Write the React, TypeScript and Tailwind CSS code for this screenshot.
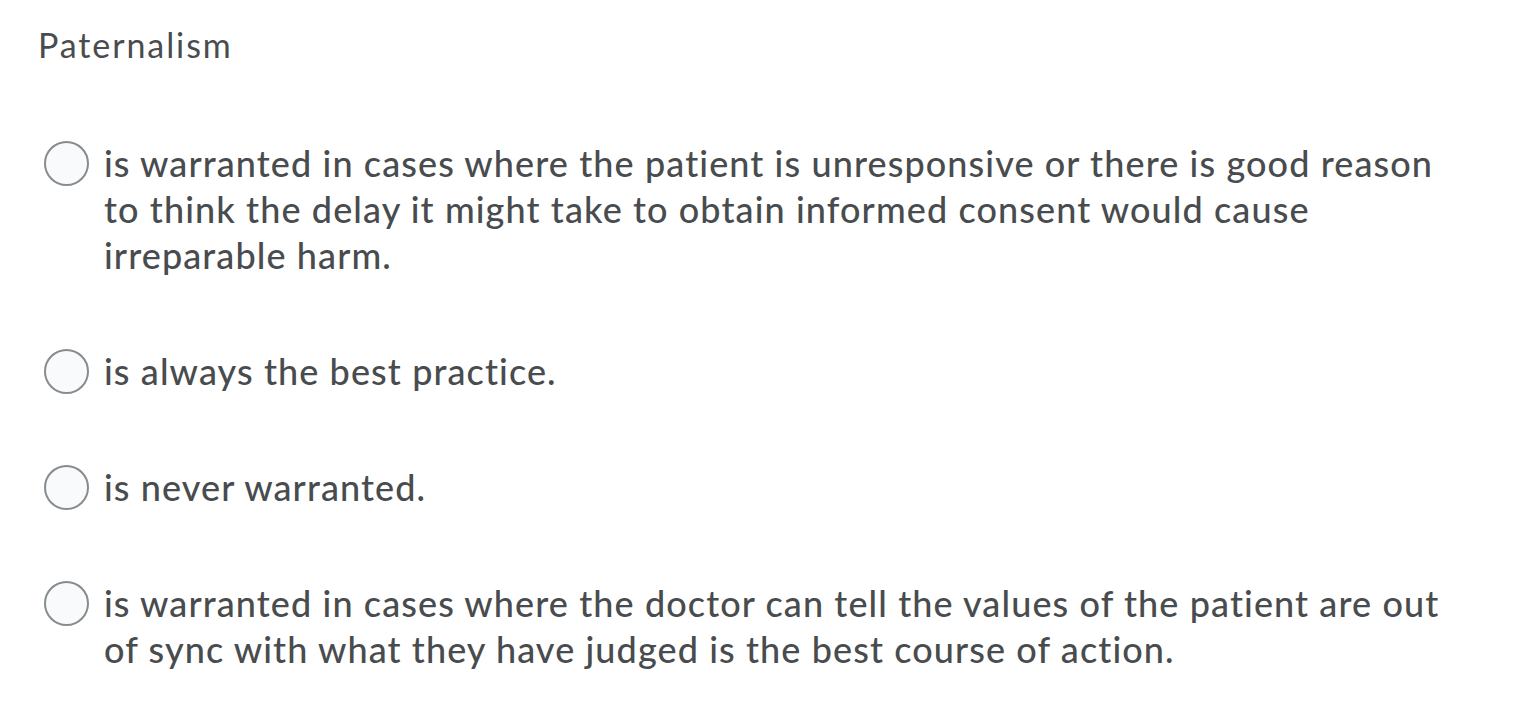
const options = [
  "is warranted in cases where the patient is unresponsive or there is good reason to think the delay it might take to obtain informed consent would cause irreparable harm.",
  "is always the best practice.",
  "is never warranted.",
  "is warranted in cases where the doctor can tell the values of the patient are out of sync with what they have judged is the best course of action.",
];

export default function App() {
  return (
    <div
      className="min-h-screen bg-white text-[#494c4e]"
      style={{ fontFamily: "Lato, 'Open Sans', sans-serif" }}
    >
      <div className="pl-[38px] pt-[24px]">
        <p className="text-[34px] leading-[42px] tracking-[1.9px]">Paternalism</p>
      </div>

      {/* answers */}
      <div className="flex flex-col gap-[70px] pl-[44px] pt-[74px]">
        {options.map((opt, i) => (
          <label key={i} className="flex items-start gap-[15px]">
            <span className="mt-[1px] w-[45px] h-[45px] shrink-0 rounded-full border-2 border-[#868c8f] bg-[#f9fafb]" />
            <span className="w-[1362px] text-[36px] leading-[46px] tracking-[1.1px] font-medium">
              {opt}
            </span>
          </label>
        ))}
      </div>
    </div>
  );
}
